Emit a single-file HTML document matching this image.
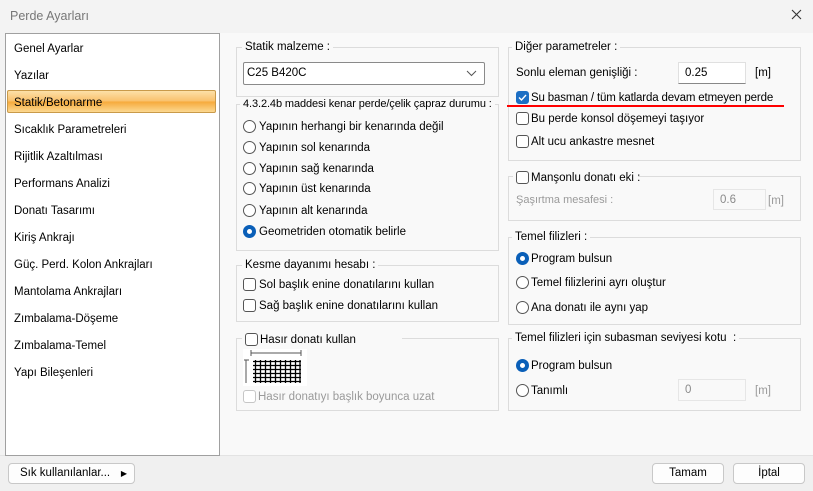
<!DOCTYPE html>
<html><head><meta charset="utf-8"><style>
*{box-sizing:border-box;margin:0;padding:0}
body{width:813px;height:491px;overflow:hidden;background:#f9f9f9;font-family:"Liberation Sans",sans-serif;font-size:11.5px;color:#000;position:relative}
.a{position:absolute;white-space:nowrap}
.t{line-height:14px}
.g{position:absolute;border:1px solid #dcdcdc}
.gl{position:absolute;background:#f9f9f9;padding:0 3px;line-height:14px}
.cb{position:absolute;width:13px;height:13px;border:1px solid #555;border-radius:3px;background:#fff}
.cb.on{background:#1d6fc4;border-color:#1d6fc4}
.rb{position:absolute;width:13px;height:13px;border:1px solid #555;border-radius:50%;background:#fff}
.rb.on{border:4px solid #0a5fb8;background:#fff}
.dis{color:#9a9a9a}
.cb.d{border-color:#c6c6c6}
.in{position:absolute;background:#fff;border:1px solid #e0e0e0;border-bottom:1px solid #888;padding-left:6px;line-height:20px}
.in.d{border-color:#e6e6e6;background:#f9f9f9;color:#8a8a8a}
.li{position:absolute;left:14px}
.btn{position:absolute;border:1px solid #c8c8c8;border-radius:4px;background:#fdfdfd;text-align:center;line-height:19px}
</style></head><body>
<div class="a" style="left:0;top:0;width:813px;height:33px;background:#f3f3f3"></div>
<div class="a" style="left:10px;top:9px;color:#777;font-size:12.5px">Perde Ayarları</div>
<svg class="a" style="left:791px;top:9px" width="11" height="11"><path d="M1 1 L10 10 M10 1 L1 10" stroke="#333" stroke-width="1.1"/></svg>
<div class="a" style="left:0;top:455px;width:813px;height:36px;background:#f0f0f0;border-top:1px solid #e3e3e3"></div>
<div class="a" style="left:0;top:33px;width:5px;height:422px;background:#f3f3f3"></div>

<div class="a" style="left:5px;top:33px;width:215px;height:423px;background:#fff;border:1px solid #a0a0a0"></div>
<div class="a" style="left:7px;top:90px;width:209px;height:23px;border:1px solid #c99a4a;border-radius:2px;background:linear-gradient(#fde0a8,#f9c06a 50%,#f6a93a 51%,#fcd890)"></div>
<div class="li a t" style="top:42px">Genel Ayarlar</div>
<div class="li a t" style="top:69px">Yazılar</div>
<div class="li a t" style="top:96px">Statik/Betonarme</div>
<div class="li a t" style="top:123px">Sıcaklık Parametreleri</div>
<div class="li a t" style="top:150px">Rijitlik Azaltılması</div>
<div class="li a t" style="top:177px">Performans Analizi</div>
<div class="li a t" style="top:204px">Donatı Tasarımı</div>
<div class="li a t" style="top:231px">Kiriş Ankrajı</div>
<div class="li a t" style="top:258px">Güç. Perd. Kolon Ankrajları</div>
<div class="li a t" style="top:285px">Mantolama Ankrajları</div>
<div class="li a t" style="top:312px">Zımbalama-Döşeme</div>
<div class="li a t" style="top:339px">Zımbalama-Temel</div>
<div class="li a t" style="top:366px">Yapı Bileşenleri</div>

<div class="g" style="left:236px;top:47px;width:263px;height:50px"></div>
<div class="gl" style="left:242px;top:40px">Statik malzeme :</div>
<div class="a" style="left:243px;top:62px;width:242px;height:23px;background:#fff;border:1px solid #8a8a8a;border-radius:2px;padding-left:3px;line-height:21px">C25 B420C</div>
<svg class="a" style="left:466px;top:70px" width="11" height="7"><path d="M1 1 L5.5 5.5 L10 1" stroke="#555" fill="none"/></svg>

<div class="g" style="left:236px;top:104px;width:263px;height:147px"></div>
<div class="gl" style="left:240px;top:97px;font-size:11px;letter-spacing:-0.1px">4.3.2.4b maddesi kenar perde/çelik çapraz durumu :</div>
<div class="rb" style="left:243px;top:120px"></div><div class="a t" style="left:259px;top:120px">Yapının herhangi bir kenarında değil</div>
<div class="rb" style="left:243px;top:141px"></div><div class="a t" style="left:259px;top:141px">Yapının sol kenarında</div>
<div class="rb" style="left:243px;top:162px"></div><div class="a t" style="left:259px;top:162px">Yapının sağ kenarında</div>
<div class="rb" style="left:243px;top:182px"></div><div class="a t" style="left:259px;top:182px">Yapının üst kenarında</div>
<div class="rb" style="left:243px;top:204px"></div><div class="a t" style="left:259px;top:204px">Yapının alt kenarında</div>
<div class="rb on" style="left:243px;top:225px"></div><div class="a t" style="left:259px;top:225px">Geometriden otomatik belirle</div>

<div class="g" style="left:236px;top:265px;width:263px;height:57px"></div>
<div class="gl" style="left:242px;top:258px">Kesme dayanımı hesabı :</div>
<div class="cb" style="left:243px;top:278px"></div><div class="a t" style="left:259px;top:278px">Sol başlık enine donatılarını kullan</div>
<div class="cb" style="left:243px;top:299px"></div><div class="a t" style="left:259px;top:299px">Sağ başlık enine donatılarını kullan</div>

<div class="g" style="left:236px;top:338px;width:263px;height:73px"></div>
<div class="a" style="left:242px;top:331px;width:160px;height:16px;background:#f9f9f9"></div>
<div class="cb" style="left:245px;top:333px"></div><div class="a t" style="left:260px;top:333px">Hasır donatı kullan</div>
<svg class="a" style="left:243px;top:349px" width="64" height="37" viewBox="0 0 64 37">
<rect width="64" height="37" fill="#fff"/>
<line x1="8" y1="4" x2="58" y2="4" stroke="#555"/><line x1="8" y1="1" x2="8" y2="7" stroke="#555"/><line x1="58" y1="1" x2="58" y2="7" stroke="#555"/>
<line x1="3" y1="11" x2="3" y2="34" stroke="#555"/><line x1="1" y1="11" x2="6" y2="11" stroke="#555"/>
<g stroke="#000" stroke-width="1.3">
<line x1="10" y1="12.5" x2="58" y2="12.5"/><line x1="10" y1="16.5" x2="58" y2="16.5"/><line x1="10" y1="20.5" x2="58" y2="20.5"/><line x1="10" y1="24.5" x2="58" y2="24.5"/><line x1="10" y1="28.5" x2="58" y2="28.5"/><line x1="10" y1="32.5" x2="58" y2="32.5"/>
<line x1="12.5" y1="11" x2="12.5" y2="34"/><line x1="17.5" y1="11" x2="17.5" y2="34"/><line x1="22.5" y1="11" x2="22.5" y2="34"/><line x1="27.5" y1="11" x2="27.5" y2="34"/><line x1="32.5" y1="11" x2="32.5" y2="34"/><line x1="37.5" y1="11" x2="37.5" y2="34"/><line x1="42.5" y1="11" x2="42.5" y2="34"/><line x1="47.5" y1="11" x2="47.5" y2="34"/><line x1="52.5" y1="11" x2="52.5" y2="34"/><line x1="57" y1="11" x2="57" y2="34"/>
</g></svg>
<div class="cb d" style="left:243px;top:390px"></div><div class="a t dis" style="left:258px;top:390px">Hasır donatıyı başlık boyunca uzat</div>

<div class="g" style="left:508px;top:47px;width:293px;height:114px"></div>
<div class="gl" style="left:512px;top:40px">Diğer parametreler :</div>
<div class="a t" style="left:516px;top:66px">Sonlu eleman genişliği :</div>
<div class="in" style="left:678px;top:62px;width:68px;height:22px">0.25</div>
<div class="a t" style="left:755px;top:66px">[m]</div>
<div class="cb on" style="left:516px;top:91px"></div>
<svg class="a" style="left:516px;top:91px" width="13" height="13"><path d="M3 6.5 L5.5 9 L10 4" stroke="#fff" stroke-width="1.4" fill="none"/></svg>
<div class="a t" style="left:531px;top:91px;letter-spacing:-0.15px">Su basman / tüm katlarda devam etmeyen perde</div>
<div class="a" style="left:507px;top:105px;width:277px;height:2px;background:#f00"></div>
<div class="cb" style="left:516px;top:112px"></div><div class="a t" style="left:531px;top:112px">Bu perde konsol döşemeyi taşıyor</div>
<div class="cb" style="left:516px;top:135px"></div><div class="a t" style="left:531px;top:135px">Alt ucu ankastre mesnet</div>

<div class="g" style="left:508px;top:176px;width:293px;height:45px"></div>
<div class="a" style="left:513px;top:169px;width:125px;height:16px;background:#f9f9f9"></div>
<div class="cb" style="left:516px;top:171px"></div><div class="a t" style="left:531px;top:171px">Manşonlu donatı eki :</div>
<div class="a t dis" style="left:516px;top:193px;font-size:11px">Şaşırtma mesafesi :</div>
<div class="in d" style="left:713px;top:189px;width:53px;height:21px">0.6</div>
<div class="a t dis" style="left:768px;top:194px">[m]</div>

<div class="g" style="left:508px;top:237px;width:293px;height:88px"></div>
<div class="gl" style="left:512px;top:230px">Temel filizleri :</div>
<div class="rb on" style="left:516px;top:252px"></div><div class="a t" style="left:531px;top:252px">Program bulsun</div>
<div class="rb" style="left:516px;top:276px"></div><div class="a t" style="left:531px;top:276px">Temel filizlerini ayrı oluştur</div>
<div class="rb" style="left:516px;top:301px"></div><div class="a t" style="left:531px;top:301px">Ana donatı ile aynı yap</div>

<div class="g" style="left:508px;top:338px;width:293px;height:73px"></div>
<div class="gl" style="left:512px;top:331px">Temel filizleri için subasman seviyesi kotu &nbsp;:</div>
<div class="rb on" style="left:516px;top:359px"></div><div class="a t" style="left:531px;top:359px">Program bulsun</div>
<div class="rb" style="left:516px;top:384px"></div><div class="a t" style="left:531px;top:384px">Tanımlı</div>
<div class="in d" style="left:678px;top:379px;width:68px;height:22px">0</div>
<div class="a t dis" style="left:755px;top:384px">[m]</div>

<div class="btn" style="left:8px;top:463px;width:127px;height:21px;text-align:left;padding-left:11px">Sık kullanılanlar...<span style="position:absolute;right:7px;font-size:8px">▶</span></div>
<div class="btn" style="left:652px;top:463px;width:72px;height:21px">Tamam</div>
<div class="btn" style="left:733px;top:463px;width:72px;height:21px">İptal</div>
</body></html>
